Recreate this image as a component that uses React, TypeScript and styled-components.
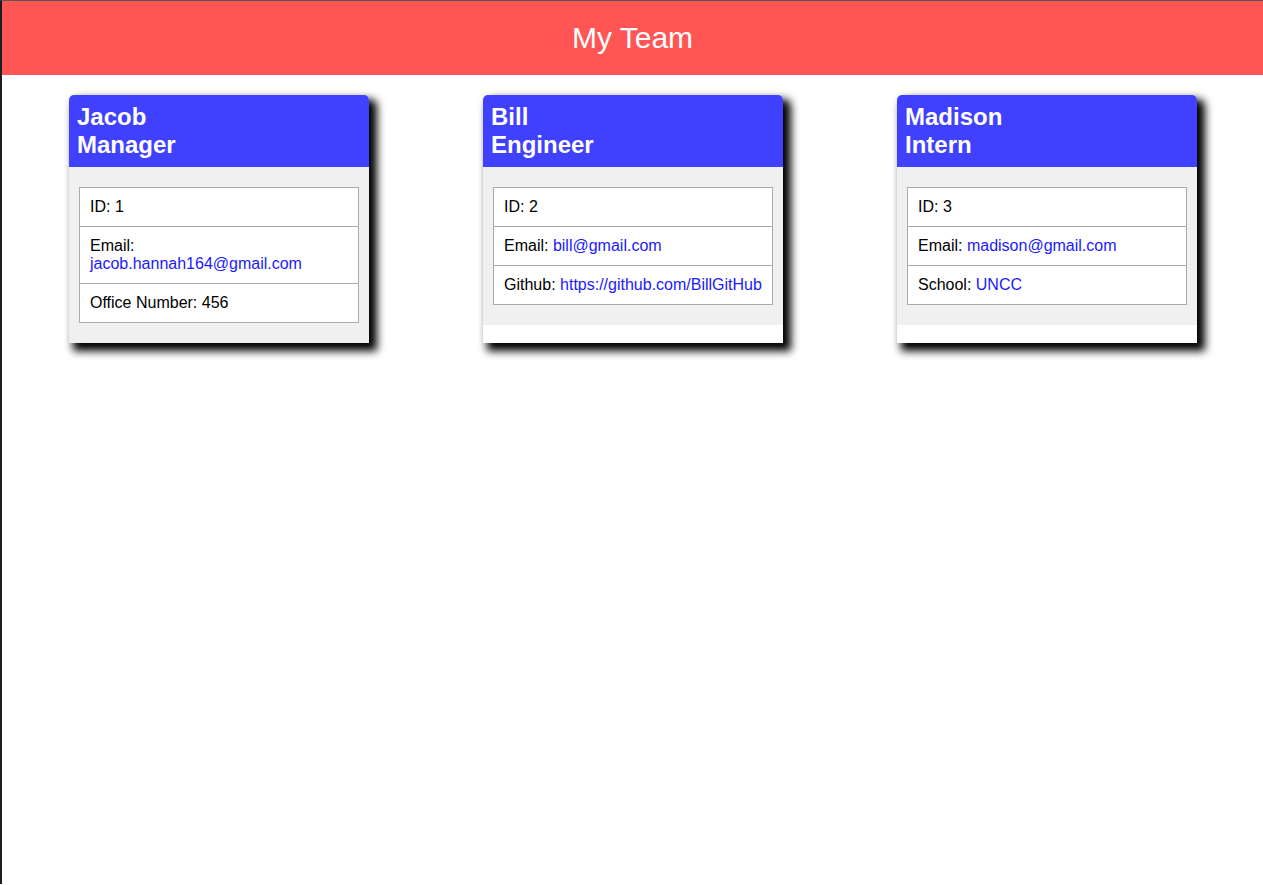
import React from 'react'
import styled, { createGlobalStyle } from 'styled-components'

const GlobalStyle = createGlobalStyle`
    html, body {
        margin: 0;
        padding: 0;
        background: #ffffff;
    }
    body {
        font-family: "Liberation Sans", Arial, sans-serif;
    }
`

const Page = styled.div`
    min-height: 884px;
    border-top: 1px solid #5a5a5a;
    border-left: 2px solid #162020;
    box-sizing: border-box;
`

const Header = styled.header`
    height: 74px;
    background: #ff5555;
    color: #ffffff;
    font-size: 30px;
    display: flex;
    align-items: center;
    justify-content: center;
`

const Row = styled.main`
    display: flex;
    align-items: stretch;
    gap: 114px;
    padding: 20px 0 0 67px;
`

const Card = styled.section`
    width: 300px;
    background: #ffffff;
    border-radius: 5px 5px 0 0;
    box-shadow: 6px 6px 8px 2px #000000;
`

const CardHead = styled.div`
    background: #4040ff;
    color: #ffffff;
    font-size: 24px;
    font-weight: 700;
    line-height: 28px;
    padding: 8px;
    border-radius: 5px 5px 0 0;
`

const CardBody = styled.div`
    background: #f0f0f0;
    padding: 20px 10px;
`

const List = styled.ul`
    list-style: none;
    margin: 0;
    padding: 0;
    border: 1px solid #aaaaaa;
    background: #ffffff;
`

const Item = styled.li`
    font-size: 16px;
    line-height: 18px;
    color: #000000;
    padding: 10px;
    & + & {
        border-top: 1px solid #aaaaaa;
    }
`

const Link = styled.a`
    color: #1a1aff;
    text-decoration: none;
`

interface Member {
    name: string
    role: string
    id: number
    email: string
    extra: { label: string; value: string; link?: boolean }
}

const team: Member[] = [
    {
        name: 'Jacob',
        role: 'Manager',
        id: 1,
        email: 'jacob.hannah164@gmail.com',
        extra: { label: 'Office Number', value: '456' },
    },
    {
        name: 'Bill',
        role: 'Engineer',
        id: 2,
        email: 'bill@gmail.com',
        extra: { label: 'Github', value: 'https://github.com/BillGitHub', link: true },
    },
    {
        name: 'Madison',
        role: 'Intern',
        id: 3,
        email: 'madison@gmail.com',
        extra: { label: 'School', value: 'UNCC', link: true },
    },
]

const MemberCard = ({ member }: { member: Member }): JSX.Element => {
    const { name, role, id, email, extra } = member
    return (
        <Card>
            <CardHead>
                {name}
                <br />
                {role}
            </CardHead>
            <CardBody>
                <List>
                    <Item>ID: {id}</Item>
                    <Item>
                        Email: <Link href={`mailto:${email}`}>{email}</Link>
                    </Item>
                    <Item>
                        {extra.label}: {extra.link ? <Link href="#">{extra.value}</Link> : extra.value}
                    </Item>
                </List>
            </CardBody>
        </Card>
    )
}

export default function App(): JSX.Element {
    return (
        <Page>
            <GlobalStyle />
            <Header>My Team</Header>
            <Row>
                {team.map((member) => (
                    <MemberCard member={member} key={member.id} />
                ))}
            </Row>
        </Page>
    )
}
